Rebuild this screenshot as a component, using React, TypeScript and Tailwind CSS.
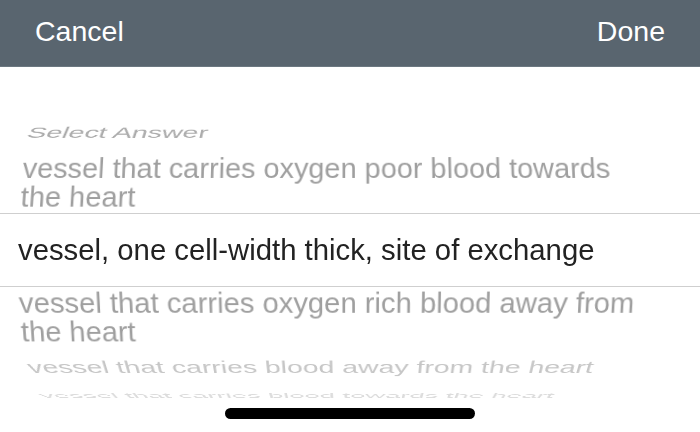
import React from "react";

export default function App() {
  return (
    <div
      className="relative w-[700px] h-[432px] overflow-hidden bg-white"
      style={{ fontFamily: '"Liberation Sans", Arial, sans-serif' }}
    >
      <div className="h-[67px] bg-[#59656f] border-b border-[#6c7881] flex items-center justify-between pl-[35px] pr-[35px] pb-[4px] text-[28.5px] text-white">
        <span>Cancel</span>
        <span>Done</span>
      </div>

      <div className="flex flex-col h-[365px] [perspective:1000px] text-[29.3px]">
        <div className="h-[49px] shrink-0" />
        <div className="h-[32px] shrink-0 flex items-center pl-[18px] pr-[50px] text-[#acacac] leading-[30px] [transform:translateY(-3px)_translateZ(-31px)_rotateX(52deg)]">
          Select Answer
        </div>
        <div className="h-[65px] shrink-0 flex items-end pl-[18px] pr-[50px] text-[#9f9f9f] leading-[30px] [transform:translateY(-1px)_translateZ(-12px)_rotateX(12deg)]">
          vessel that carries oxygen poor blood towards the heart
        </div>
        <div className="h-[74px] shrink-0 flex items-center border-t border-b border-[#cfcfcf] pl-[18px] pr-[50px] text-[#222222] leading-[30px]">
          vessel, one cell-width thick, site of exchange
        </div>
        <div className="h-[60px] shrink-0 flex items-start pl-[18px] pr-[50px] text-[#9f9f9f] leading-[30px] [transform:translateY(1px)_translateZ(-6px)_rotateX(-12deg)]">
          vessel that carries oxygen rich blood away from the heart
        </div>
        <div className="h-[40px] shrink-0 flex items-center pl-[18px] pr-[50px] text-[#c6c6c6] leading-[30px] [transform:translateY(4px)_translateZ(-31px)_rotateX(-48deg)]">
          vessel that carries blood away from the heart
        </div>
        <div className="h-[22px] shrink-0 flex items-center pl-[18px] pr-[50px] text-[#dcdcdc] leading-[30px] [transform:translateY(8px)_translateZ(-71px)_rotateX(-68deg)]">
          vessel that carries blood towards the heart
        </div>
      </div>

      <div className="absolute left-[225px] top-[408px] w-[250px] h-[11px] rounded-full bg-black" />
    </div>
  );
}
